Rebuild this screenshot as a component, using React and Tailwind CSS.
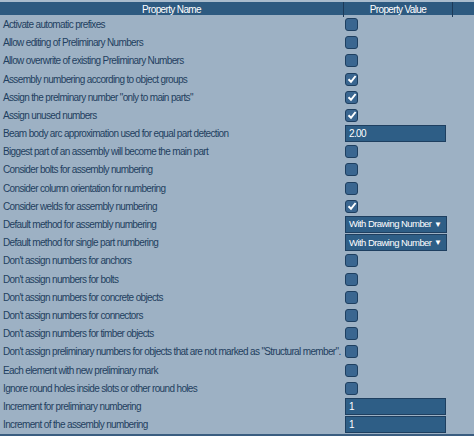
import React from 'react';

const rows = [
  { name: 'Activate automatic prefixes', type: 'check', value: false },
  { name: 'Allow editing of Preliminary Numbers', type: 'check', value: false },
  { name: 'Allow overwrite of existing Preliminary Numbers', type: 'check', value: false },
  { name: 'Assembly numbering according to object groups', type: 'check', value: true },
  { name: 'Assign the prelminary number "only to main parts"', type: 'check', value: true },
  { name: 'Assign unused numbers', type: 'check', value: true },
  { name: 'Beam body arc approximation used for equal part detection', type: 'text', value: '2.00' },
  { name: 'Biggest part of an assembly will become the main part', type: 'check', value: false },
  { name: 'Consider bolts for assembly numbering', type: 'check', value: false },
  { name: 'Consider column orientation for numbering', type: 'check', value: false },
  { name: 'Consider welds for assembly numbering', type: 'check', value: true },
  { name: 'Default method for assembly numbering', type: 'select', value: 'With Drawing Number' },
  { name: 'Default method for single part numbering', type: 'select', value: 'With Drawing Number' },
  { name: "Don't assign numbers for anchors", type: 'check', value: false },
  { name: "Don't assign numbers for bolts", type: 'check', value: false },
  { name: "Don't assign numbers for concrete objects", type: 'check', value: false },
  { name: "Don't assign numbers for connectors", type: 'check', value: false },
  { name: "Don't assign numbers for timber objects", type: 'check', value: false },
  { name: "Don't assign preliminary numbers for objects that are not marked as \"Structural member\".", type: 'check', value: false },
  { name: 'Each element with new preliminary mark', type: 'check', value: false },
  { name: 'Ignore round holes inside slots or other round holes', type: 'check', value: false },
  { name: 'Increment for preliminary numbering', type: 'text', value: '1' },
  { name: 'Increment of the assembly numbering', type: 'text', value: '1' },
];

const Check = ({ on }) => (
  <div className="w-[13px] h-[13px] rounded-[3px] bg-[#3a6690] border border-[#1e3f60] flex items-center justify-center">
    {on && (
      <svg width="10" height="10" viewBox="0 0 10 10">
        <path d="M1.5 5.2 L4 7.8 L8.6 2" fill="none" stroke="#ffffff" strokeWidth="2" />
      </svg>
    )}
  </div>
);

const Value = ({ row }) => {
  if (row.type === 'check') return <Check on={row.value} />;
  if (row.type === 'select')
    return (
      <div className="w-[102px] h-[17px] bg-[#2e5e86] border border-[#1e3f60] flex items-center justify-between pl-[3px] pr-[4px] text-white whitespace-nowrap text-[9.5px] tracking-[-0.55px]">
        <span>{row.value}</span>
        <span className="text-[8px] tracking-normal">▼</span>
      </div>
    );
  return (
    <div className="w-[101px] h-[17px] bg-[#2e5e86] border border-[#1e3f60] flex items-center pl-[3px] text-white">
      {row.value}
    </div>
  );
};

export default function App() {
  return (
    <div
      className="w-[474px] h-[436px] bg-[#9db1c4] overflow-hidden flex flex-col text-[10px] tracking-[-0.65px] text-[#1f3f60]"
      style={{ fontFamily: '"Liberation Sans", Arial, sans-serif' }}
    >
      <div className="h-[3px] bg-[#a9bccd]" />
      <div className="h-[13px] bg-[#2d5a80] grid grid-cols-[343px_110px_1fr] text-white">
        <div className="flex items-center justify-center">Property Name</div>
        <div className="flex items-center justify-center border-l border-[#1c3a58] border-r">Property Value</div>
        <div />
      </div>
      <div className="flex-1 flex flex-col">
        {rows.map((row, i) => (
          <div key={i} className="h-[18.2px] shrink-0 grid grid-cols-[343px_1fr] items-center">
            <div className="pl-[3px] whitespace-nowrap">{row.name}</div>
            <div className="pl-[2px] flex items-center">
              <Value row={row} />
            </div>
          </div>
        ))}
      </div>
      <div className="h-[3px] bg-[#3a5d80]" />
    </div>
  );
}
